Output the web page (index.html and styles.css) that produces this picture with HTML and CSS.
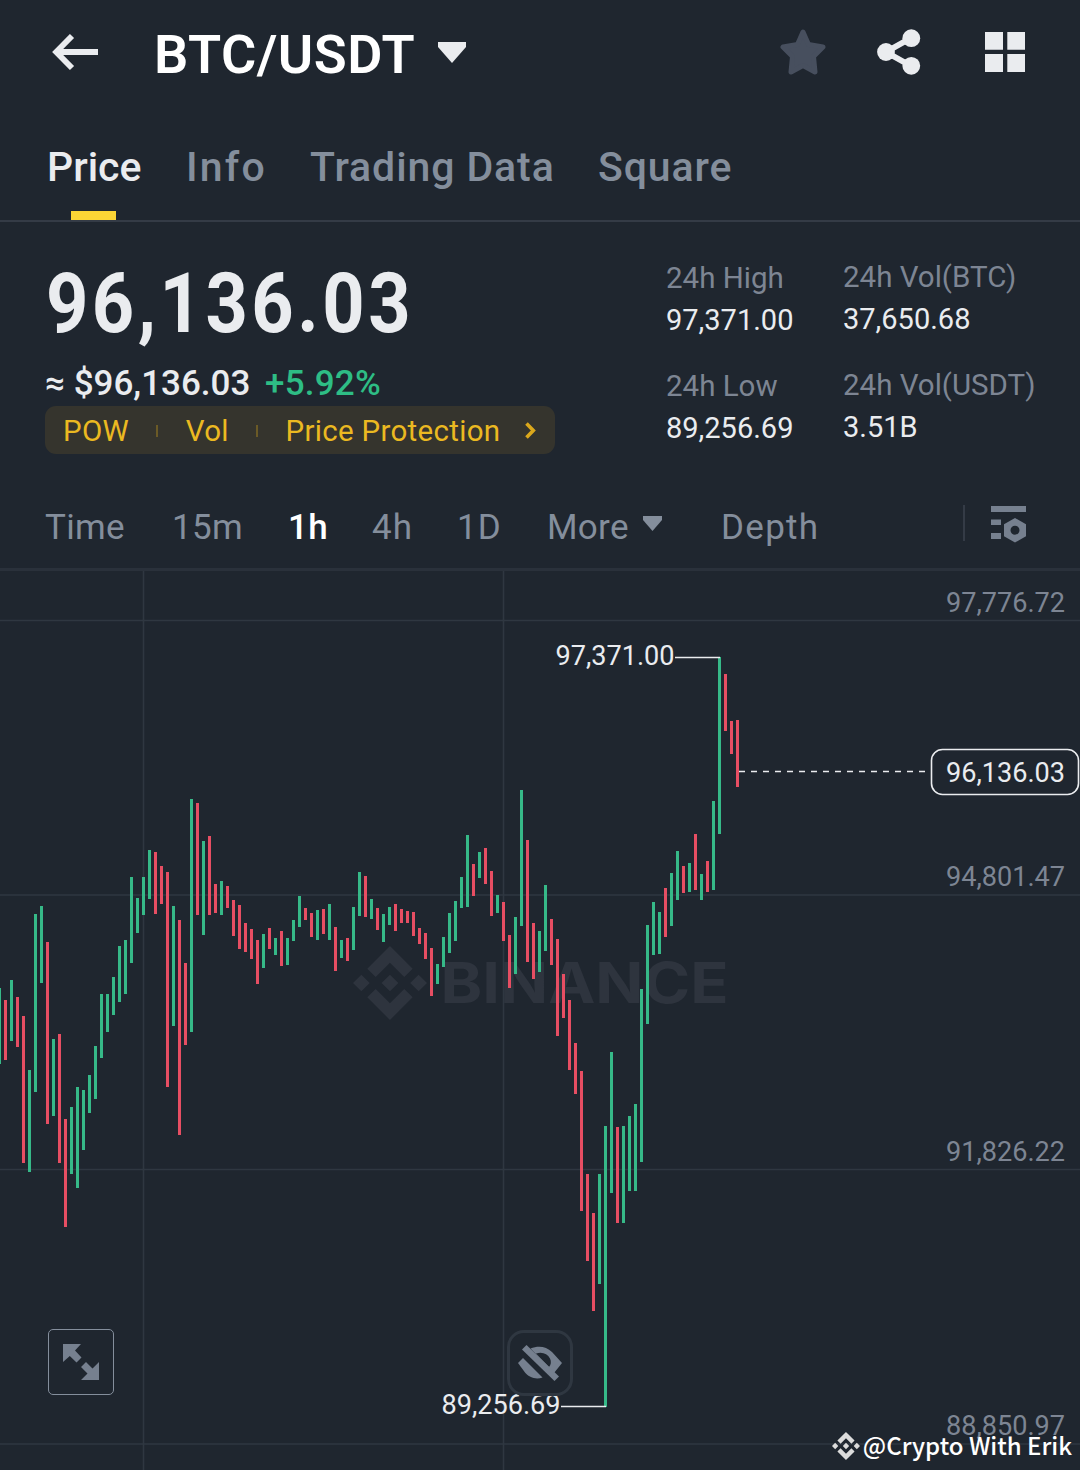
FILE: index.html
```html
<!DOCTYPE html>
<html lang="en">
<head>
  <meta charset="UTF-8" />
  <meta name="viewport" content="width=device-width, initial-scale=1.0" />
  <title>BTC/USDT</title>
  <link rel="stylesheet" href="styles.css">
</head>
<body>

  <header class="header">
    <svg class="back" width="46" height="36" viewBox="0 0 46 36" fill="none" stroke="#eaecef" stroke-width="5.8">
      <path d="M20 2 L4.200 18 L20 34 M4 18 H46" />
    </svg>
    <h1 class="pair">BTC/USDT</h1>
    <svg class="pair-caret" width="28" height="21" viewBox="0 0 28 21"><path d="M0 0H28V5L14 21L0 5Z" fill="#eaecef" /></svg>
    <div class="actions">
      <svg width="46" height="48" viewBox="0 0 46 48">
        <path d="M23 4L28.500 16.500L43 19L33.500 28.500L35 44L23 37.500L11 44L12.500 28.500L3 19L17.500 16.500Z" fill="#474f5e" stroke="#474f5e" stroke-width="5" stroke-linejoin="round" />
      </svg>
      <svg class="share" width="46" height="46" viewBox="0 0 46 46" fill="#eaecef">
        <path d="M35 9L10 23L35 37" fill="none" stroke="#eaecef" stroke-width="6" />
        <circle cx="10" cy="23" r="8.900" />
        <circle cx="35.300" cy="9.200" r="8.900" />
        <circle cx="35.300" cy="36.800" r="8.900" />
      </svg>
      <svg class="grid-icon" width="40" height="40" viewBox="0 0 40 40" fill="#eaecef">
        <path d="M0 0H18V17.700H0ZM22.300 0H40V17.700H22.300ZM0 22H18V40H0ZM22.300 22H40V40H22.300Z" />
      </svg>
    </div>
  </header>

  <nav class="tabs">
    <span class="tab active">Price</span>
    <span class="tab info">Info</span>
    <span class="tab">Trading Data</span>
    <span class="tab">Square</span>
  </nav>

  <section class="summary">
    <div class="quote">
      <div class="last">96,136.03</div>
      <div class="fiat">≈ $96,136.03 <span class="change">+5.92%</span></div>
      <div class="tags">
        <span>POW</span>
        <i class="sep"></i>
        <span>Vol</span>
        <i class="sep"></i>
        <span>Price Protection</span>
        <svg width="11" height="17" viewBox="0 0 11 17" fill="none" stroke="#dba81c" stroke-width="3.600"><path d="M1.500 1.500L8.300 8.500L1.500 15.500" /></svg>
      </div>
    </div>
    <div class="stats">
      <div class="stat"><label>24h High</label><b>97,371.00</b></div>
      <div class="stat"><label>24h Low</label><b>89,256.69</b></div>
    </div>
    <div class="stats volume">
      <div class="stat"><label>24h Vol(BTC)</label><b>37,650.68</b></div>
      <div class="stat"><label>24h Vol(USDT)</label><b>3.51B</b></div>
    </div>
  </section>

  <nav class="intervals">
    <span>Time</span>
    <span>15m</span>
    <span class="active">1h</span>
    <span class="short">4h</span>
    <span class="short">1D</span>
    <span class="more">More
      <svg width="19" height="15" viewBox="0 0 19 15"><path d="M0 0H19V4L9.500 15L0 4Z" fill="#848e9c" /></svg>
    </span>
    <span class="depth">Depth</span>
    <i class="divider"></i>
    <svg class="settings" width="36" height="37" viewBox="0 0 36 37" fill="#76808f">
      <path d="M0 0H35V6H0ZM0 13.500H10V19H0ZM0 27H10V33H0Z" />
      <path fill-rule="evenodd" d="M24 12L35 18.200V30.300L24 36.500L13 30.300V18.200ZM24 19.700A4.500 4.500 0 1 0 24 28.700A4.500 4.500 0 1 0 24 19.700Z" />
    </svg>
  </nav>

  <main class="chart">
    <svg class="plot" width="1080" height="899" viewBox="0 571 1080 899">
      <path class="grid-line" d="M0 620.500H1080M0 895H1080M0 1169.500H1080M0 1444H1080M143.500 571V1470M503.500 571V1470" />

      <g class="watermark">
        <svg x="353" y="946" width="74" height="74" viewBox="0 0 24 24"><use href="#logo" /></svg>
        <text x="440.500" y="1003" textLength="288" lengthAdjust="spacingAndGlyphs">BINANCE</text>
      </g>

      <g id="bars"></g>

      <path class="leader" d="M675 657.500H720M561 1406.500H606" />
      <path class="last-line" d="M739 771.500H926" />

      <g class="axis">
        <text x="946" y="612">97,776.72</text>
        <text x="946" y="886">94,801.47</text>
        <text x="946" y="1161">91,826.22</text>
        <text x="946" y="1435">88,850.97</text>
      </g>
      <rect class="last-box" x="931.500" y="749.500" width="147" height="45" rx="11" />
      <g class="mark">
        <text x="946" y="782">96,136.03</text>
        <text x="555.500" y="665">97,371.00</text>
        <text x="441.500" y="1414">89,256.69</text>
      </g>
    </svg>

    <button class="chart-btn expand">
      <svg width="36" height="36" viewBox="0 0 36 36" fill="#76808f">
        <path d="M0 0H18L12 6.500L18.500 13.500L13.500 18.500L6.800 12L0 18ZM36 36H18L24.500 29.500L18 23L23 18L29.500 24.500L36 18Z" />
      </svg>
    </button>
    <button class="chart-btn hide">
      <svg width="44" height="36" viewBox="0 0 44 36" fill="#76808f">
        <path d="M4 4.500L8.500 0L41 31.500L36.500 36Z" />
        <path d="M0 18L5 13L24.500 32.500C18 35 11 32.500 7 27.500Z" />
        <path fill-rule="evenodd" d="M12.500 3.500C20 .5 28 1 34 7L44 18L36 28ZM18 8.500C24 6.500 29.500 8.500 32 13.500C33.500 16.500 33 20 31 22Z" />
      </svg>
    </button>

    <div class="credit">
      <svg width="28" height="28" viewBox="0 0 24 24" fill="#dcdcdc">
        <path id="logo" d="M16.624 13.920l2.718 2.715-7.353 7.353-7.353-7.352 2.717-2.716 4.636 4.660 4.635-4.660zm4.637-4.636L24 12l-2.715 2.716L18.568 12l2.693-2.716zm-9.272 0l2.716 2.692-2.717 2.717L9.272 12l2.717-2.715zm-9.273 0L5.409 12l-2.692 2.692L0 12l2.716-2.716zM11.989.012l7.353 7.329-2.718 2.715-4.635-4.636-4.636 4.660-2.717-2.715 7.353-7.353z" />
      </svg>
      <span>@Crypto With Erik</span>
    </div>
  </main>

  <script>
    // one bar per hour: direction, top y, bottom y
    const bars = [
      ['g', 988, 1064], ['r', 1000, 1060], ['g', 980, 1041], ['r', 997, 1047], ['r', 1016, 1163], ['g', 1070, 1172],
      ['g', 914, 1092], ['g', 906, 983], ['r', 942, 1124], ['g', 1039, 1116], ['r', 1034, 1163], ['r', 1119, 1227],
      ['g', 1107, 1174], ['g', 1087, 1188], ['g', 1090, 1150], ['g', 1075, 1113], ['g', 1046, 1099], ['g', 994, 1058],
      ['g', 994, 1032], ['g', 977, 1015], ['g', 946, 1002], ['g', 940, 994], ['g', 877, 963], ['g', 898, 933],
      ['g', 877, 915], ['g', 850, 899], ['r', 852, 914], ['r', 866, 904], ['r', 872, 1087], ['g', 906, 1026],
      ['r', 920, 1135], ['r', 963, 1045], ['g', 799, 1032], ['r', 803, 915], ['g', 841, 935], ['r', 836, 915],
      ['r', 884, 913], ['g', 881, 915], ['r', 886, 908], ['r', 900, 936], ['r', 905, 949], ['r', 923, 952],
      ['r', 929, 959], ['r', 940, 984], ['g', 934, 968], ['r', 928, 949], ['g', 938, 955], ['r', 931, 966],
      ['g', 938, 965], ['g', 920, 941], ['g', 896, 927], ['r', 908, 920], ['r', 913, 937], ['g', 910, 940],
      ['r', 909, 934], ['g', 904, 940], ['r', 927, 971], ['g', 940, 958], ['r', 938, 961], ['g', 907, 950],
      ['g', 872, 916], ['r', 876, 917], ['g', 899, 919], ['r', 908, 930], ['g', 914, 942], ['g', 907, 925],
      ['r', 904, 931], ['r', 909, 923], ['r', 911, 923], ['r', 912, 936], ['r', 928, 944], ['r', 933, 959],
      ['r', 948, 996], ['g', 964, 984], ['g', 937, 967], ['g', 913, 953], ['g', 901, 941], ['g', 877, 908],
      ['g', 835, 907], ['r', 864, 896], ['g', 852, 878], ['r', 848, 884], ['r', 871, 916], ['g', 895, 913],
      ['r', 902, 941], ['r', 935, 988], ['g', 917, 974], ['g', 790, 926], ['r', 840, 962], ['r', 923, 979],
      ['g', 931, 972], ['g', 885, 951], ['r', 919, 965], ['r', 939, 1036], ['r', 974, 1018], ['r', 1000, 1070],
      ['r', 1043, 1094], ['r', 1071, 1211], ['r', 1174, 1261], ['r', 1213, 1311], ['g', 1174, 1284], ['g', 1126, 1407],
      ['g', 1052, 1193], ['r', 1127, 1223], ['g', 1126, 1223], ['g', 1116, 1191], ['g', 1104, 1191], ['g', 989, 1162],
      ['g', 925, 1024], ['g', 902, 955], ['g', 912, 954], ['r', 888, 937], ['g', 873, 926], ['g', 851, 900],
      ['r', 866, 893], ['g', 863, 892], ['r', 834, 890], ['g', 874, 900], ['r', 861, 892], ['g', 801, 890],
      ['g', 657, 834], ['r', 674, 731], ['r', 721, 754], ['r', 720, 787]
    ];
    const group = document.getElementById('bars');

    bars.forEach(([dir, top, bottom], i) => {
      const rect = document.createElementNS('http://www.w3.org/2000/svg', 'rect');
      rect.setAttribute('class', dir === 'g' ? 'up' : 'down');
      rect.setAttribute('x', i * 6 - 2);
      rect.setAttribute('y', top);
      rect.setAttribute('width', 3);
      rect.setAttribute('height', bottom - top);
      group.appendChild(rect);
    });
  </script>

</body>
</html>
```
FILE: styles.css
```css
* {
  box-sizing: border-box;
}
body {
  margin: 0;
  width: 1080px;
  height: 1470px;
  overflow: hidden;
  background: #1f262f;
  color: #eaecef;
  font-family: Roboto, sans-serif;
}
svg {
  display: block;
  flex: none;
}

/* header */
.header {
  display: flex;
  align-items: center;
  height: 104px;
  padding: 0 55px 0 52px;
}
.pair {
  margin: 0 0 0 56px;
  padding-top: 5px;
  font-size: 54px;
  line-height: 64px;
  font-weight: 600;
  letter-spacing: 0.5px;
  color: #fff;
}
.pair-caret {
  margin-left: 23px;
}
.actions {
  display: flex;
  align-items: center;
  margin-left: auto;
}
.share {
  margin-left: 50px;
}
.grid-icon {
  margin-left: 63px;
}

/* tabs */
.tabs {
  display: grid;
  grid-template-columns: 139px 124px 288px auto;
  height: 118px;
  padding: 10px 0 0 47px;
  border-bottom: 2px solid #343b46;
  font-size: 41px;
  line-height: 106px;
  font-weight: 500;
  letter-spacing: 0.9px;
  color: #848e9c;
}
.tab {
  position: relative;
}
.tab.active {
  color: #eaecef;
  letter-spacing: 0;
}
.tab.active::after {
  content: "";
  position: absolute;
  left: 24px;
  bottom: 0;
  width: 45px;
  height: 9px;
  background: #fcd535;
}
.tab.info {
  letter-spacing: 2.2px;
}

/* price summary */
.summary {
  display: flex;
  height: 232px;
  padding-left: 45px;
}
.quote {
  width: 621px;
  padding-top: 40px;
}
.last {
  font-size: 84px;
  line-height: 84px;
  font-weight: 700;
  letter-spacing: 4px;
  transform: scaleX(0.88);
  transform-origin: left;
  padding-left: 1px;
}
.fiat {
  margin-top: 16px;
  font-size: 35px;
  line-height: 44px;
  font-weight: 500;
}
.change {
  margin-left: 6px;
  letter-spacing: 0.2px;
  color: #2ebd85;
}
.tags {
  display: flex;
  align-items: center;
  gap: 27.4px;
  width: 510px;
  height: 48px;
  padding: 1px 0 0 18px;
  border-radius: 11px;
  background: #35342d;
  font-size: 29.5px;
  letter-spacing: 0.3px;
  color: #ebb921;
}
.tags svg {
  margin-left: -3px;
}
.sep {
  width: 2px;
  height: 12px;
  background: #6b5a26;
}
.stats {
  display: flex;
  flex-direction: column;
  gap: 24px;
  width: 177px;
  padding-top: 35px;
}
.stats.volume {
  width: 237px;
  padding-top: 34px;
}
.stat {
  font-size: 29.5px;
  line-height: 42px;
}
.stat label {
  display: block;
  color: #7d8593;
}
.stat b {
  display: block;
  font-size: 29px;
  font-weight: 450;
  letter-spacing: 0;
}

/* chart intervals */
.intervals {
  display: grid;
  grid-template-columns: 127px 116px 84px 85px 90px 174px 242px 27px auto;
  align-items: center;
  height: 117px;
  padding: 32px 0 0 45px;
  border-bottom: 3px solid #2a313b;
  font-size: 35px;
  letter-spacing: 0.3px;
  color: #848e9c;
}
.intervals .active {
  font-weight: 500;
  color: #fff;
}
.intervals .short {
  letter-spacing: 1px;
}
.intervals .depth {
  letter-spacing: 1.3px;
}
.more {
  display: flex;
  align-items: center;
  gap: 14px;
}
.more svg {
  margin-bottom: 8px;
}
.divider {
  width: 2px;
  height: 36px;
  margin: 0 0 8px 0;
  background: #343b46;
}
.settings {
  margin: 0 0 5px 1px;
}

/* chart */
.chart {
  position: relative;
}
.grid-line {
  fill: none;
  stroke: #2f3741;
  stroke-width: 1.6;
}
.watermark {
  fill: #2e343e;
  font-family: Inter, sans-serif;
  font-size: 56px;
  font-weight: 700;
}
.up {
  fill: #36b988;
}
.down {
  fill: #e74e63;
}
.leader {
  fill: none;
  stroke: #eaecef;
  stroke-width: 1.6;
}
.last-line {
  stroke: #eaecef;
  stroke-width: 1.6;
  stroke-dasharray: 6 6;
}
.last-box {
  fill: #1f262f;
  stroke: #eaecef;
  stroke-width: 1.6;
}
.axis {
  fill: #7d8593;
  font-size: 27.1px;
}
.mark {
  fill: #eaecef;
  font-size: 27.1px;
}
.chart-btn {
  position: absolute;
  top: 758px;
  display: flex;
  align-items: center;
  justify-content: center;
  width: 66px;
  height: 66px;
  padding: 0;
  background: #1f262f;
}
.chart-btn.expand {
  left: 48px;
  border: 1.5px solid #848e9c;
  border-radius: 5px;
}
.chart-btn.hide {
  top: 759px;
  left: 507px;
  border: 3px solid #2f3741;
  border-radius: 17px;
}
.credit {
  position: absolute;
  right: 8px;
  bottom: 7px;
  display: flex;
  align-items: center;
  gap: 3px;
  font-family: "Noto Sans CJK SC", sans-serif;
  font-size: 24px;
  line-height: 36px;
  font-weight: 500;
  color: #fff;
}
.credit svg {
  margin-top: 2px;
}
```
